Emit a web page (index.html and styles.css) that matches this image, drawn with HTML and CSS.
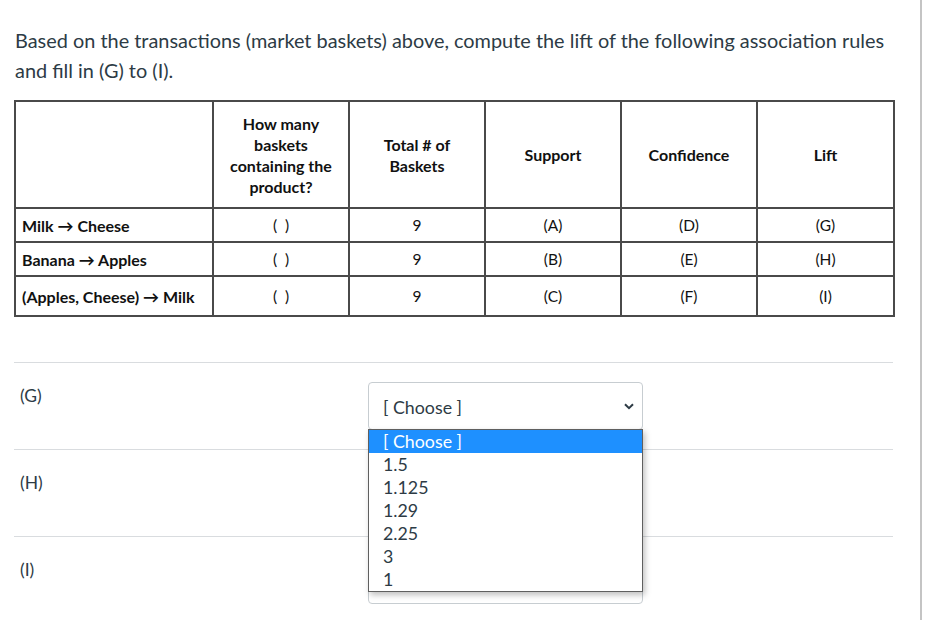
FILE: index.html
```html
<!DOCTYPE html>
<html>
<head>
<meta charset="utf-8">
<link rel="stylesheet" href="styles.css">
</head>
<body>
<div class="page">
  <p class="intro">Based on the transactions (market baskets) above, compute the lift of the following association rules and fill in (G) to (I).</p>
  <table class="rules">
    <colgroup>
      <col style="width:198px"><col style="width:136px"><col style="width:136px"><col style="width:136px"><col style="width:136px"><col style="width:137px">
    </colgroup>
    <tr class="head">
      <th></th>
      <th>How many<br>baskets<br>containing the<br>product?</th>
      <th>Total # of<br>Baskets</th>
      <th>Support</th>
      <th>Confidence</th>
      <th>Lift</th>
    </tr>
    <tr class="r1">
      <td class="rule">Milk &#8594; Cheese</td><td>(&nbsp;&nbsp;)</td><td>9</td><td>(A)</td><td>(D)</td><td>(G)</td>
    </tr>
    <tr class="r2">
      <td class="rule">Banana &#8594; Apples</td><td>(&nbsp;&nbsp;)</td><td>9</td><td>(B)</td><td>(E)</td><td>(H)</td>
    </tr>
    <tr class="r3">
      <td class="rule">(Apples, Cheese) &#8594; Milk</td><td>(&nbsp;&nbsp;)</td><td>9</td><td>(C)</td><td>(F)</td><td>(I)</td>
    </tr>
  </table>

  <div class="answers">
    <div class="answer">
      <div class="label">(G)</div>
      <div class="select-wrap">
        <div class="select">
          <span>[ Choose ]</span>
          <svg class="chev" width="10" height="7" viewBox="0 0 10 7"><path d="M1 1.2 L5 5.2 L9 1.2" fill="none" stroke="#2d3b45" stroke-width="2"/></svg>
        </div>
        <ul class="dropdown">
          <li class="active">[ Choose ]</li>
          <li>1.5</li>
          <li>1.125</li>
          <li>1.29</li>
          <li>2.25</li>
          <li>3</li>
          <li>1</li>
        </ul>
      </div>
    </div>
    <div class="answer">
      <div class="label">(H)</div>
      <div class="select-wrap">
        <div class="select">
          <span>[ Choose ]</span>
          <svg class="chev" width="10" height="7" viewBox="0 0 10 7"><path d="M1 1.2 L5 5.2 L9 1.2" fill="none" stroke="#2d3b45" stroke-width="2"/></svg>
        </div>
      </div>
    </div>
    <div class="answer">
      <div class="label">(I)</div>
      <div class="select-wrap">
        <div class="select">
          <span>[ Choose ]</span>
          <svg class="chev" width="10" height="7" viewBox="0 0 10 7"><path d="M1 1.2 L5 5.2 L9 1.2" fill="none" stroke="#2d3b45" stroke-width="2"/></svg>
        </div>
      </div>
    </div>
  </div>
</div>
</body>
</html>
```
FILE: styles.css
```css
html, body {
  margin: 0;
  padding: 0;
  background: #fff;
}
body {
  font-family: Lato, "Open Sans", sans-serif;
  color: #2d3b45;
  height: 620px;
  overflow: hidden;
}
.page {
  width: 922px;
  height: 620px;
  border-right: 2px solid #c4c4c4;
  box-sizing: border-box;
  padding: 25px 0 0 14px;
}
.intro {
  margin: 0 0 15px 1px;
  font-size: 19.9px;
  line-height: 30px;
  width: 882px;
}
.rules {
  border-collapse: collapse;
  table-layout: fixed;
  width: 880px;
  font-family: Lato, sans-serif;
  color: #111;
}
.rules th, .rules td {
  border: 2px solid #4a4a4a;
  text-align: center;
  padding: 0;
}
.rules th {
  height: 105px;
  font-size: 16px;
  font-weight: 700;
  line-height: 21px;
}
.rules td {
  font-size: 15.5px;
  font-weight: 400;
}
.rules .r1 td, .rules .r2 td { height: 32px; }
.rules .r3 td { height: 38px; }
.rules td.rule {
  text-align: left;
  padding-left: 6px;
  font-size: 16px;
  font-weight: 700;
}
.answers {
  margin-top: 45px;
  width: 879px;
}
.answer {
  border-top: 1px solid #d9dcdf;
  display: grid;
  grid-template-columns: 354px 275px;
  padding: 19px 0;
}
.label {
  padding-left: 6px;
  font-size: 17.5px;
  line-height: 28px;
}
.select-wrap {
  position: relative;
}
.select {
  height: 48px;
  box-sizing: border-box;
  border: 1px solid #c7cdd1;
  border-radius: 4px;
  display: flex;
  align-items: center;
  justify-content: space-between;
  padding: 0 8px 0 14px;
  font-size: 17.8px;
  background: #fff;
}
.select span {
  margin-top: 1px;
}
.chev {
  display: block;
  margin-top: 1px;
}
.dropdown {
  position: absolute;
  left: 0;
  top: 47px;
  width: 275px;
  height: 163px;
  box-sizing: border-box;
  margin: 0;
  padding: 0;
  list-style: none;
  background: #fff;
  border: 1px solid #5f5f5f;
  box-shadow: 2px 3px 6px rgba(0,0,0,0.25);
  z-index: 5;
}
.dropdown li {
  height: 23px;
  line-height: 22px;
  font-size: 17.8px;
  padding-left: 14px;
  color: #2d3b45;
}
.dropdown li.active {
  background: #1e90ff;
  color: #fff;
}
```
